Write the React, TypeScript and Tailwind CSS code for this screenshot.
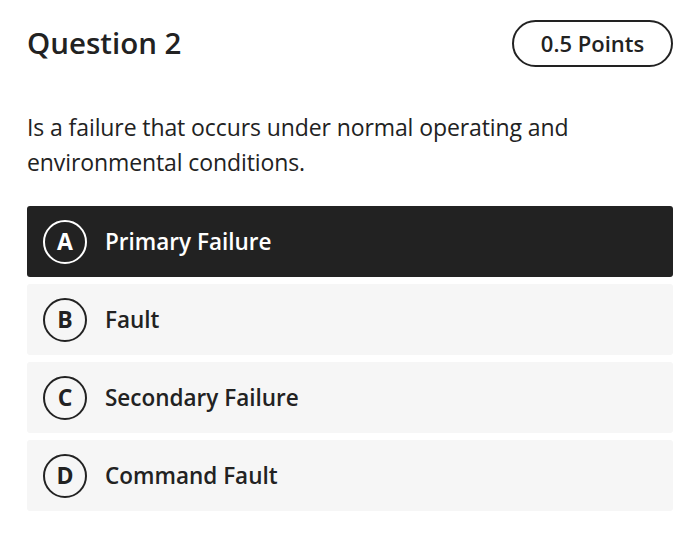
export default function App() {
  const options = [
    { letter: 'A', label: 'Primary Failure', selected: true },
    { letter: 'B', label: 'Fault', selected: false },
    { letter: 'C', label: 'Secondary Failure', selected: false },
    { letter: 'D', label: 'Command Fault', selected: false },
  ]

  return (
    <div className="w-[700px] h-[552px] bg-white px-[27px] pt-[20px] text-[#222222] font-['Open_Sans',sans-serif]">
      <div className="flex items-center justify-between">
        <h1 className="text-[29.5px] font-semibold">Question 2</h1>
        <div className="h-[47px] w-[161px] rounded-full border-2 border-[#222222] flex items-center justify-center text-[22px] font-semibold">
          0.5 Points
        </div>
      </div>

      <p className="mt-[43px] text-[23px] leading-[35px] tracking-[-0.1px]">
        Is a failure that occurs under normal operating and environmental conditions.
      </p>

      <div className="mt-[26px] flex flex-col gap-[7px]">
        {options.map((o) => (
          <div
            key={o.letter}
            className={
              o.selected
                ? 'h-[71px] rounded-[3px] bg-[#222222] text-white flex items-center px-[16px]'
                : 'h-[71px] rounded-[3px] bg-[#f6f6f6] text-[#222222] flex items-center px-[16px]'
            }
          >
            <div
              className={
                o.selected
                  ? 'w-[44px] h-[44px] rounded-full border-[2.5px] border-white flex items-center justify-center text-[23px] font-bold'
                  : 'w-[44px] h-[44px] rounded-full border-[2.5px] border-[#222222] flex items-center justify-center text-[23px] font-bold'
              }
            >
              {o.letter}
            </div>
            <span className="ml-[18px] text-[22.5px] font-semibold">{o.label}</span>
          </div>
        ))}
      </div>
    </div>
  )
}
